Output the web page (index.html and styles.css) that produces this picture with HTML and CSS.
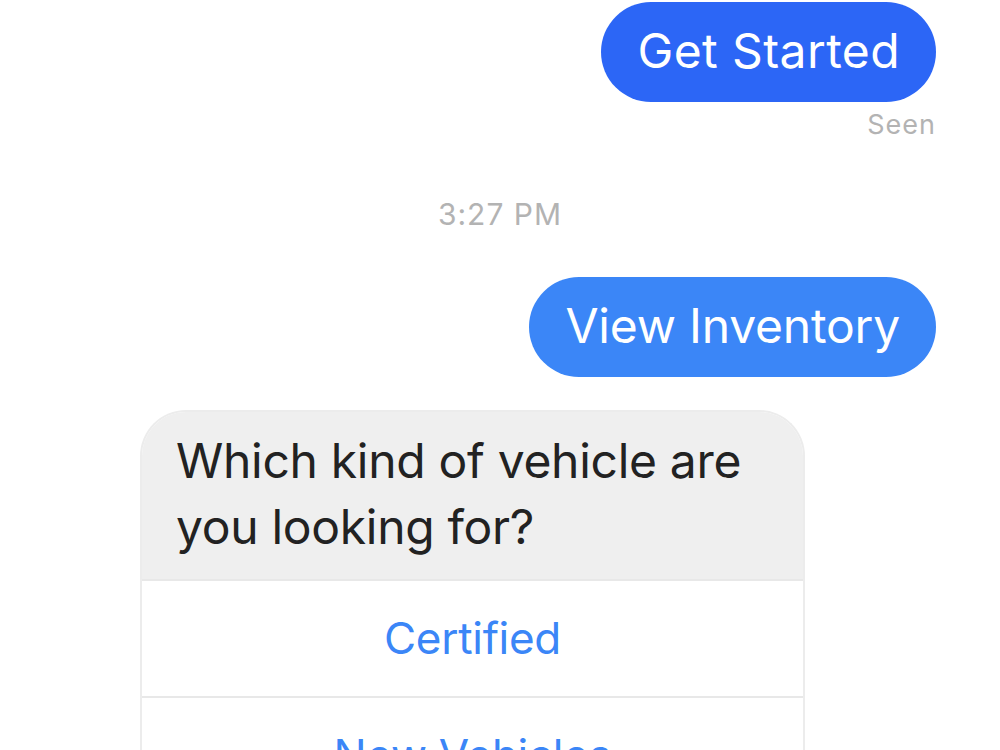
FILE: index.html
```html
<!DOCTYPE html>
<html lang="en">
<head>
    <meta charset="UTF-8">
    <meta name="viewport" content="width=device-width, initial-scale=1.0">
    <title>Chat</title>
    <link rel="stylesheet" href="styles.css">
</head>
<body>
    <div id="thread">
        <div class="row row-right">
            <div class="bubble bubble-dark">Get Started</div>
        </div>
        <div class="seen">Seen</div>

        <div class="timestamp">3:27 PM</div>

        <div class="row row-right">
            <div class="bubble bubble-light">View Inventory</div>
        </div>

        <div class="card">
            <div class="card-text">Which kind of vehicle are you looking for?</div>
            <div class="card-option">Certified</div>
            <div class="card-option">New Vehicles</div>
        </div>
    </div>
</body>
</html>
```

FILE: styles.css
```css
body {
    font-family: Inter, "Noto Sans", sans-serif;
    background-color: #fff;
    margin: 0;
    padding: 0;
    overflow: hidden;
}

#thread {
    display: flex;
    flex-direction: column;
    padding: 2px 64px 0 140px;
}

.row {
    display: flex;
}

.row-right {
    justify-content: flex-end;
}

.bubble {
    height: 100px;
    line-height: 98px;
    padding: 0 36px;
    border-radius: 50px;
    color: #fff;
    font-size: 48px;
    letter-spacing: 0.4px;
}

.bubble-dark {
    background-color: #2c66f6;
}

.bubble-light {
    background-color: #3b86f7;
    letter-spacing: -0.2px;
}

.seen {
    align-self: flex-end;
    margin-top: 8px;
    font-size: 27px;
    line-height: 30px;
    letter-spacing: 1px;
    color: #b3b3b3;
}

.timestamp {
    margin: 58px -64px 0 -140px;
    text-align: center;
    font-size: 30px;
    line-height: 32px;
    letter-spacing: 1px;
    color: #b3b3b3;
}

.timestamp + .row {
    margin-top: 47px;
}

.card {
    width: 665px;
    margin-top: 33px;
    border-radius: 46px 46px 0 0;
    overflow: hidden;
    border: 2px solid #ececec;
    border-bottom: none;
    box-sizing: border-box;
}

.card-text {
    background-color: #efefef;
    padding: 16px 34px 19px;
    font-size: 48px;
    line-height: 66px;
    color: #222;
    letter-spacing: -0.3px;
}

.card-option {
    height: 115px;
    line-height: 115px;
    text-align: center;
    border-top: 2px solid #e8e8e8;
    background-color: #fff;
    font-size: 44px;
    color: #3b86f7;
    letter-spacing: -0.3px;
}
```
